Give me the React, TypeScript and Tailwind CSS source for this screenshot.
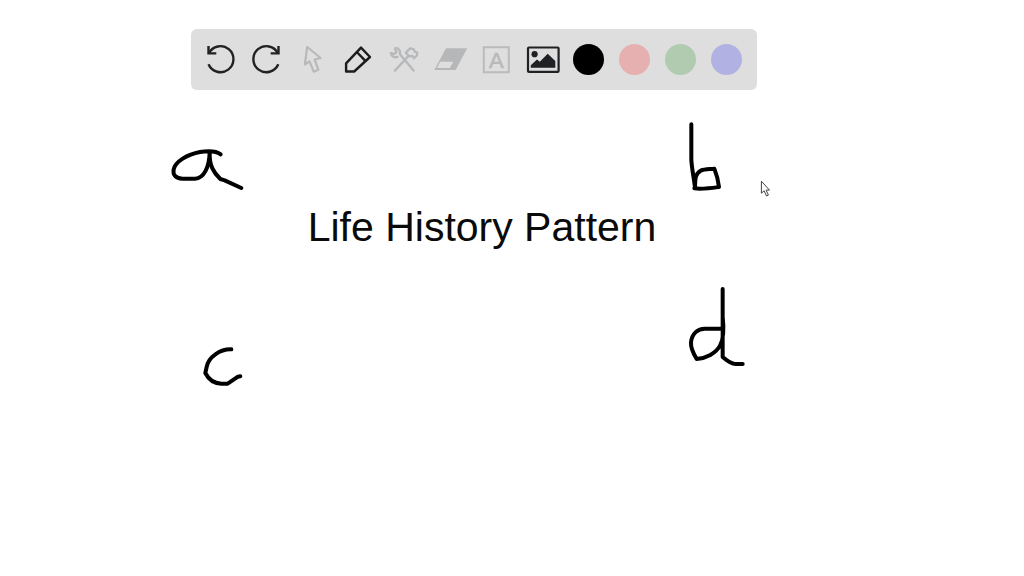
import React from "react";

const tools = [
  {
    label: "Undo",
    icon: (
      <g stroke="#222" strokeWidth="2.4">
        <path d="M3.5 3v7.4h7.8" />
        <path d="M3.5 21.3A13 13 0 1 0 3.8 10.4" />
      </g>
    ),
  },
  {
    label: "Redo",
    icon: (
      <g stroke="#222" strokeWidth="2.4">
        <path d="M27.5 3v7.4h-7.8" />
        <path d="M27.3 21.3A13 13 0 1 1 27 10.4" />
      </g>
    ),
  },
  {
    label: "Select",
    icon: (
      <path
        d="M10.2 4 7.8 21.5l4.7-3.2 4.2 10.4 4.7-1.9-3.8-10.3 6-1.5z"
        stroke="#b9b9b9"
        strokeWidth="2.2"
        strokeLinejoin="round"
      />
    ),
  },
  {
    label: "Pen",
    icon: (
      <g stroke="#1c1c1c" strokeWidth="2.4" strokeLinejoin="round">
        <path d="M18 4.6 27 14 11.2 28.5H3.1v-8.2z" />
        <path d="m13.8 9 8.8 9.2" />
      </g>
    ),
  },
  {
    label: "Tools",
    icon: (
      <g stroke="#b6b8ba" strokeWidth="2.3" strokeLinejoin="round">
        <path d="M5.4 5.6c3.4-1.4 6.4 1.4 5.4 5.4L25.2 28.2M9.4 13.4c-3.6 2-7.2.2-7.6-3.4l3.8 1 2-2.3-2.2-3.1" />
        <path d="M5.2 28.4 19.4 13" />
        <path d="m16.8 9.8 4.2-4.4 3.4.7 1.6 2.8 2.2.6-.2 3-3 2.7-1.6-2.3-2.8.6z" />
      </g>
    ),
  },
  {
    label: "Eraser",
    icon: (
      <g>
        <path d="M11 5.2h21.2L20.6 27H-.6z" fill="#b5b7b9" />
        <path d="M5.3 18.8h13l-3.5 6.2H1.9z" fill="#dedede" />
      </g>
    ),
  },
  {
    label: "Text",
    icon: (
      <g>
        <rect x="2.8" y="4.2" width="25" height="25" stroke="#bbb" strokeWidth="2" />
        <text
          x="15.3"
          y="24.6"
          fill="#b9b9b9"
          stroke="#b9b9b9"
          strokeWidth="0.6"
          fontSize="22"
          textAnchor="middle"
          className="font-['Liberation_Sans',Arial,sans-serif]"
        >
          A
        </text>
      </g>
    ),
  },
  {
    label: "Image",
    icon: (
      <g>
        <rect x="1" y="4.5" width="30.6" height="24.4" rx="1" stroke="#202124" strokeWidth="2.2" />
        <circle cx="7.6" cy="11.2" r="3.1" fill="#202124" />
        <path d="M3.8 24.8v-2.5L10 16.5l2.8 2.2 7.9-7.9 7.6 7.2v6.8z" fill="#202124" />
      </g>
    ),
  },
];

const colors = [
  { label: "Black", swatch: "bg-black" },
  { label: "Red", swatch: "bg-[#e6b0b0]" },
  { label: "Green", swatch: "bg-[#b0cbb0]" },
  { label: "Purple", swatch: "bg-[#b1b1e3]" },
];

// Pen strokes on the board, drawn at three units per pixel
const strokes = [
  {
    id: "a",
    place: "left-[160px] top-[135px] h-[70px] w-[100px]",
    box: "0 0 300 210",
    d: "M182 58C170 49 145 47 120 51C82 58 46 80 41 103C38 119 46 130 68 131H105C132 130 148 96 149 52C148 92 160 112 181 132L194 136L244 159",
  },
  {
    id: "b",
    place: "left-[670px] top-[110px] h-[100px] w-[90px]",
    box: "0 0 270 300",
    d: "M64 43V150C66 180 72 205 75 233C76 210 74 192 92 182C105 177 120 178 133 176C140 193 145 212 147 231C125 234 98 238 73 235",
  },
  {
    id: "c",
    place: "left-[190px] top-[335px] h-[60px] w-[70px]",
    box: "0 0 210 180",
    d: "M124 43C90 42 55 66 50 96L46 114C56 134 72 145 94 146H113L144 125L151 124",
  },
  {
    id: "d",
    place: "left-[670px] top-[275px] h-[100px] w-[100px]",
    box: "0 0 300 300",
    d: "M158 42V125C162 160 162 190 150 212C138 235 108 250 80 252C68 232 62 215 63 202C66 175 84 161 104 161H156M158 125V246C172 258 184 267 196 267H218",
  },
];

const Toolbar = () => (
  <div
    role="toolbar"
    aria-label="Whiteboard tools"
    className="flex gap-3.5 rounded-md bg-[#dedede] px-3.5 pt-3.5 pb-[15px]"
  >
    {tools.map((tool) => (
      <button key={tool.label} type="button" aria-label={tool.label} className="h-8 w-8">
        <svg viewBox="0 0 32 32" fill="none" className="h-8 w-8 overflow-visible">
          {tool.icon}
        </svg>
      </button>
    ))}
    {colors.map((color) => (
      <button key={color.label} type="button" aria-label={color.label} className="h-8 w-8">
        <span className={`block h-[31px] w-[31px] rounded-full ${color.swatch}`} />
      </button>
    ))}
  </div>
);

const App = () => {
  return (
    <main className="relative min-h-screen bg-white pt-[29px] font-['Liberation_Sans',Arial,sans-serif]">
      <header className="flex justify-center pr-[76px]">
        <Toolbar />
      </header>

      <h1 className="mt-[113px] pr-[60px] text-center text-[41px] leading-[48px] text-[#0a0a0a]">
        Life History Pattern
      </h1>

      {strokes.map((stroke) => (
        <svg
          key={stroke.id}
          viewBox={stroke.box}
          fill="none"
          stroke="#000"
          strokeWidth="12"
          strokeLinecap="round"
          strokeLinejoin="round"
          className={`pointer-events-none absolute ${stroke.place}`}
        >
          <path d={stroke.d} />
        </svg>
      ))}

      {/* mouse pointer */}
      <svg
        viewBox="0 0 10 18"
        className="pointer-events-none absolute left-[760px] top-[180px] h-[18px] w-[10px] overflow-visible"
      >
        <path
          d="M1.4 1.2v12l2.7-2.4 2.4 5.2 1.9-.9-2.3-5h3.4z"
          fill="#fff"
          stroke="#444"
          strokeWidth="1"
        />
      </svg>
    </main>
  );
};

export default App;
